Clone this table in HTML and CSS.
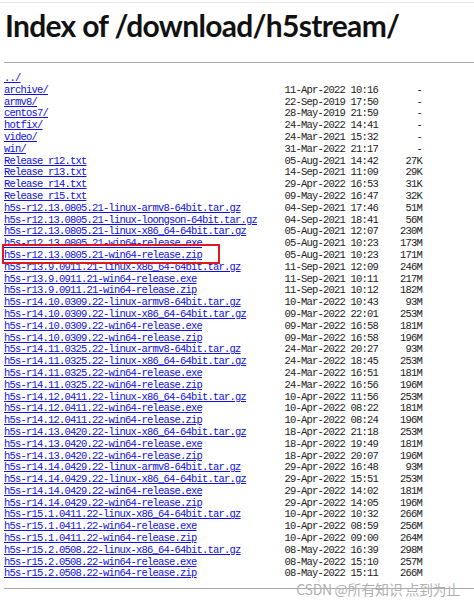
FILE: index.html
```html
<!DOCTYPE html>
<html lang="en">
<head>
    <meta charset="UTF-8">
    <title>Index of /download/h5stream/</title>
    <link rel="stylesheet" href="styles.css">
</head>
<body>
    <h1>Index of /download/h5stream/</h1>
    <hr>
    <div class="listing">
        <div class="entry"><a href="../">../</a><span></span><span></span></div>
        <div class="entry"><a href="archive/">archive/</a><span class="date">11-Apr-2022 10:16</span><span class="size">-</span></div>
        <div class="entry"><a href="armv8/">armv8/</a><span class="date">22-Sep-2019 17:50</span><span class="size">-</span></div>
        <div class="entry"><a href="centos7/">centos7/</a><span class="date">28-May-2019 21:59</span><span class="size">-</span></div>
        <div class="entry"><a href="hotfix/">hotfix/</a><span class="date">24-May-2022 14:41</span><span class="size">-</span></div>
        <div class="entry"><a href="video/">video/</a><span class="date">24-Mar-2021 15:32</span><span class="size">-</span></div>
        <div class="entry"><a href="win/">win/</a><span class="date">31-Mar-2022 21:17</span><span class="size">-</span></div>
        <div class="entry"><a href="#">Release r12.txt</a><span class="date">05-Aug-2021 14:42</span><span class="size">27K</span></div>
        <div class="entry"><a href="#">Release r13.txt</a><span class="date">14-Sep-2021 11:09</span><span class="size">29K</span></div>
        <div class="entry"><a href="#">Release r14.txt</a><span class="date">29-Apr-2022 16:53</span><span class="size">31K</span></div>
        <div class="entry"><a href="#">Release r15.txt</a><span class="date">09-May-2022 16:47</span><span class="size">32K</span></div>
        <div class="entry"><a href="#">h5s-r12.13.0805.21-linux-armv8-64bit.tar.gz</a><span class="date">04-Sep-2021 17:46</span><span class="size">51M</span></div>
        <div class="entry"><a href="#">h5s-r12.13.0805.21-linux-loongson-64bit.tar.gz</a><span class="date">04-Sep-2021 18:41</span><span class="size">56M</span></div>
        <div class="entry"><a href="#">h5s-r12.13.0805.21-linux-x86_64-64bit.tar.gz</a><span class="date">05-Aug-2021 12:07</span><span class="size">230M</span></div>
        <div class="entry"><a href="#">h5s-r12.13.0805.21-win64-release.exe</a><span class="date">05-Aug-2021 10:23</span><span class="size">173M</span></div>
        <div class="entry marked"><a href="#">h5s-r12.13.0805.21-win64-release.zip</a><span class="date">05-Aug-2021 10:23</span><span class="size">171M</span></div>
        <div class="entry"><a href="#">h5s-r13.9.0911.21-linux-x86_64-64bit.tar.gz</a><span class="date">11-Sep-2021 12:09</span><span class="size">246M</span></div>
        <div class="entry"><a href="#">h5s-r13.9.0911.21-win64-release.exe</a><span class="date">11-Sep-2021 10:11</span><span class="size">217M</span></div>
        <div class="entry"><a href="#">h5s-r13.9.0911.21-win64-release.zip</a><span class="date">11-Sep-2021 10:12</span><span class="size">182M</span></div>
        <div class="entry"><a href="#">h5s-r14.10.0309.22-linux-armv8-64bit.tar.gz</a><span class="date">10-Mar-2022 10:43</span><span class="size">93M</span></div>
        <div class="entry"><a href="#">h5s-r14.10.0309.22-linux-x86_64-64bit.tar.gz</a><span class="date">09-Mar-2022 22:01</span><span class="size">253M</span></div>
        <div class="entry"><a href="#">h5s-r14.10.0309.22-win64-release.exe</a><span class="date">09-Mar-2022 16:58</span><span class="size">181M</span></div>
        <div class="entry"><a href="#">h5s-r14.10.0309.22-win64-release.zip</a><span class="date">09-Mar-2022 16:58</span><span class="size">196M</span></div>
        <div class="entry"><a href="#">h5s-r14.11.0325.22-linux-armv8-64bit.tar.gz</a><span class="date">24-Mar-2022 20:27</span><span class="size">93M</span></div>
        <div class="entry"><a href="#">h5s-r14.11.0325.22-linux-x86_64-64bit.tar.gz</a><span class="date">24-Mar-2022 18:45</span><span class="size">253M</span></div>
        <div class="entry"><a href="#">h5s-r14.11.0325.22-win64-release.exe</a><span class="date">24-Mar-2022 16:51</span><span class="size">181M</span></div>
        <div class="entry"><a href="#">h5s-r14.11.0325.22-win64-release.zip</a><span class="date">24-Mar-2022 16:56</span><span class="size">196M</span></div>
        <div class="entry"><a href="#">h5s-r14.12.0411.22-linux-x86_64-64bit.tar.gz</a><span class="date">10-Apr-2022 11:56</span><span class="size">253M</span></div>
        <div class="entry"><a href="#">h5s-r14.12.0411.22-win64-release.exe</a><span class="date">10-Apr-2022 08:22</span><span class="size">181M</span></div>
        <div class="entry"><a href="#">h5s-r14.12.0411.22-win64-release.zip</a><span class="date">10-Apr-2022 08:24</span><span class="size">196M</span></div>
        <div class="entry"><a href="#">h5s-r14.13.0420.22-linux-x86_64-64bit.tar.gz</a><span class="date">18-Apr-2022 21:18</span><span class="size">253M</span></div>
        <div class="entry"><a href="#">h5s-r14.13.0420.22-win64-release.exe</a><span class="date">18-Apr-2022 19:49</span><span class="size">181M</span></div>
        <div class="entry"><a href="#">h5s-r14.13.0420.22-win64-release.zip</a><span class="date">18-Apr-2022 20:07</span><span class="size">196M</span></div>
        <div class="entry"><a href="#">h5s-r14.14.0429.22-linux-armv8-64bit.tar.gz</a><span class="date">29-Apr-2022 16:48</span><span class="size">93M</span></div>
        <div class="entry"><a href="#">h5s-r14.14.0429.22-linux-x86_64-64bit.tar.gz</a><span class="date">29-Apr-2022 15:51</span><span class="size">253M</span></div>
        <div class="entry"><a href="#">h5s-r14.14.0429.22-win64-release.exe</a><span class="date">29-Apr-2022 14:02</span><span class="size">181M</span></div>
        <div class="entry"><a href="#">h5s-r14.14.0429.22-win64-release.zip</a><span class="date">29-Apr-2022 14:05</span><span class="size">196M</span></div>
        <div class="entry"><a href="#">h5s-r15.1.0411.22-linux-x86_64-64bit.tar.gz</a><span class="date">10-Apr-2022 10:32</span><span class="size">266M</span></div>
        <div class="entry"><a href="#">h5s-r15.1.0411.22-win64-release.exe</a><span class="date">10-Apr-2022 08:59</span><span class="size">256M</span></div>
        <div class="entry"><a href="#">h5s-r15.1.0411.22-win64-release.zip</a><span class="date">10-Apr-2022 09:00</span><span class="size">264M</span></div>
        <div class="entry"><a href="#">h5s-r15.2.0508.22-linux-x86_64-64bit.tar.gz</a><span class="date">08-May-2022 16:39</span><span class="size">298M</span></div>
        <div class="entry"><a href="#">h5s-r15.2.0508.22-win64-release.exe</a><span class="date">08-May-2022 15:10</span><span class="size">257M</span></div>
        <div class="entry"><a href="#">h5s-r15.2.0508.22-win64-release.zip</a><span class="date">08-May-2022 15:11</span><span class="size">266M</span></div>
    </div>
    <hr>
    <div class="watermark">CSDN @所有知识 点到为止</div>
</body>
</html>
```

FILE: styles.css
```css
html {
    height: 601px;
    overflow: hidden;
}
body {
    margin: 2px 0 0;
    padding: 0 0 0 4px;
    border-top: 1px solid #e6e6e6;
    background: white;
    color: #111;
}
h1 {
    font-family: Lato, "Noto Sans", sans-serif;
    font-weight: bold;
    font-size: 30px;
    line-height: 36px;
    letter-spacing: -0.7px;
    margin: 4px 0 19px 1px;
}
hr {
    border: 0;
    border-top: 1px solid #a8a8a8;
    margin: 0;
}
.listing {
    font-family: "Liberation Mono", monospace;
    font-size: 10.5px;
    letter-spacing: -0.8px;
    line-height: 11.8px;
    padding: 10px 0 8px;
}
.entry {
    display: grid;
    grid-template-columns: 280.5px 93.5px 44px;
    white-space: pre;
}
.entry a {
    color: #1010e0;
}
.date {
    color: #222;
}
.size {
    color: #222;
    text-align: right;
}
.marked {
    position: relative;
}
.marked::after {
    content: "";
    position: absolute;
    left: -2px;
    top: -6px;
    width: 214px;
    height: 16px;
    border: 2px solid #e0191c;
}
.watermark {
    margin: -8px 14px 0 0;
    text-align: right;
    line-height: 16px;
    font-family: "Noto Sans CJK SC", "Noto Sans", sans-serif;
    font-size: 14px;
    letter-spacing: -0.3px;
    color: #b0b0b0;
}
```
